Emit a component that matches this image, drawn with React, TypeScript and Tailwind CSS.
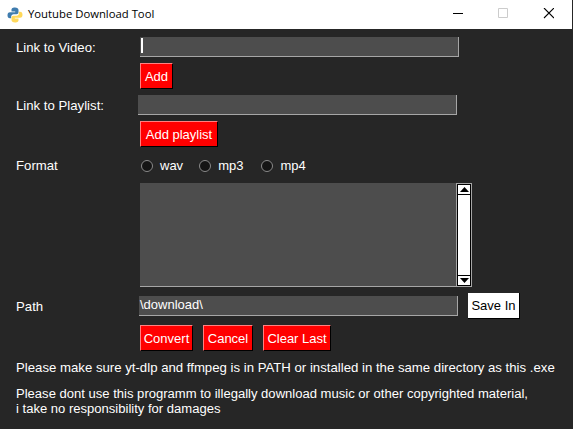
const font = "font-['Liberation_Sans',Arial,sans-serif]";
const redBtn =
  "h-[26px] bg-[#ff0000] text-white text-[13px] leading-none border border-t-[#ff8080] border-l-[#ff8080] border-r-black border-b-black";

const Row = ({ label, className, children }: { label?: string; className?: string; children: React.ReactNode }) => (
  <div className={`flex items-center ${className ?? ""}`}>
    <div className="w-[124px] shrink-0 pt-[2px] text-[13.2px] leading-[18px] text-white">{label}</div>
    {children}
  </div>
);

const Field = ({ className, children }: { className?: string; children?: React.ReactNode }) => (
  <div className={`h-[20px] w-[319px] bg-[#4d4d4d] border-b border-r border-[#a6a6a6] text-[13px] leading-[18px] text-white ${className ?? ""}`}>
    {children}
  </div>
);

const Radio = ({ label, className }: { label: string; className?: string }) => (
  <div className={`mt-[2px] flex items-center text-[13px] text-white ${className ?? ""}`}>
    <span className="w-[12px] h-[12px] rounded-full bg-[#141414] border border-[#8a8a8a]" />
    <span className="ml-[7px]">{label}</span>
  </div>
);

const Arrow = ({ up }: { up?: boolean }) => (
  <div className={`h-[10px] bg-white border-black flex items-center justify-center ${up ? "border-b" : "border-t"}`}>
    <svg width="9" height="5" viewBox="0 0 9 5">
      <path d={up ? "M4.5 0L9 5H0Z" : "M0 0H9L4.5 5Z"} fill="#000" />
    </svg>
  </div>
);

export default function App() {
  return (
    <div className={`w-[573px] h-[429px] overflow-hidden bg-[#262626] ${font}`}>
      <div className="h-[29px] bg-white flex items-center border-r border-[#262626]">
        <svg className="ml-[7px]" width="16" height="16" viewBox="0 0 16 16">
          <path d="M8 0.5C5 0.5 4.5 1.7 4.5 3V4.5H8.2V5.2H3C1.3 5.2 0.5 6.5 0.5 8.2C0.5 10 1.3 11.2 3 11.2H4.2V9.5C4.2 8.2 5.3 7.2 6.6 7.2H9.6C10.7 7.2 11.5 6.3 11.5 5.2V3C11.5 1.5 10.2 0.5 8 0.5Z" fill="#3f7cae" />
          <path d="M8 15.5C11 15.5 11.5 14.3 11.5 13V11.5H7.8V10.8H13C14.7 10.8 15.5 9.5 15.5 7.8C15.5 6 14.7 4.8 13 4.8H11.8V6.5C11.8 7.8 10.7 8.8 9.4 8.8H6.4C5.3 8.8 4.5 9.7 4.5 10.8V13C4.5 14.5 5.8 15.5 8 15.5Z" fill="#ffd85a" />
        </svg>
        <span className="ml-[5px] text-[11.3px] text-black font-['Open_Sans',sans-serif]">Youtube Download Tool</span>
        <svg className="ml-auto mr-[18px]" width="101" height="13" viewBox="0 0 101 13">
          <path d="M0 5.5H10" stroke="#000" />
          <path d="M45.5 0.5H54.5V9.5H45.5Z" fill="none" stroke="#cccccc" />
          <path d="M91 0L101 10M101 0L91 10" stroke="#000" strokeWidth="1.1" />
        </svg>
      </div>

      <div className="pl-[16px]">
        <Row label="Link to Video:" className="mt-[8px]">
          <Field>
            <div className="ml-[1px] mt-[1px] w-[2px] h-[15px] bg-white" />
          </Field>
        </Row>
        <button className={`${redBtn} block w-[33px] ml-[124px] mt-[6px]`}>Add</button>

        <Row label="Link to Playlist:" className="mt-[6px]">
          <Field className="-ml-[2px]" />
        </Row>
        <button className={`${redBtn} block w-[78px] ml-[124px] mt-[6px]`}>Add playlist</button>

        <Row label="Format" className="mt-[9px] h-[18px]">
          <Radio label="wav" className="ml-[1px]" />
          <Radio label="mp3" className="ml-[16px]" />
          <Radio label="mp4" className="ml-[18px]" />
        </Row>

        <Row className="mt-[9px] !items-stretch h-[104px]">
          <div className="w-[316px] bg-[#4d4d4d] border-b border-[#a6a6a6]" />
          <div className="w-[16px] bg-white border border-[#a6a6a6] flex">
            <div className="flex-1 border border-black flex flex-col justify-between">
              <Arrow up />
              <Arrow />
            </div>
          </div>
        </Row>

        <Row label="Path" className="mt-[6px] h-[26px]">
          <Field className="-ml-[1px] pl-[1px]">\download\</Field>
          <button className="ml-[10px] h-[26px] w-[52px] bg-white text-black text-[13px] leading-none border-r border-b border-black">Save In</button>
        </Row>

        <div className="ml-[124px] mt-[6px] flex gap-[10px]">
          <button className={`${redBtn} w-[53px]`}>Convert</button>
          <button className={`${redBtn} w-[50px]`}>Cancel</button>
          <button className={`${redBtn} w-[68px]`}>Clear Last</button>
        </div>

        <p className="mt-[9px] text-[13.2px] leading-[16px] text-white whitespace-nowrap">
          Please make sure yt-dlp and ffmpeg is in PATH or installed in the same directory as this .exe
        </p>
        <p className="mt-[10px] text-[13.05px] leading-[15px] text-white whitespace-nowrap">
          Please dont use this programm to illegally download music or other copyrighted material,
          <br />i take no responsibility for damages
        </p>
      </div>
    </div>
  );
}
